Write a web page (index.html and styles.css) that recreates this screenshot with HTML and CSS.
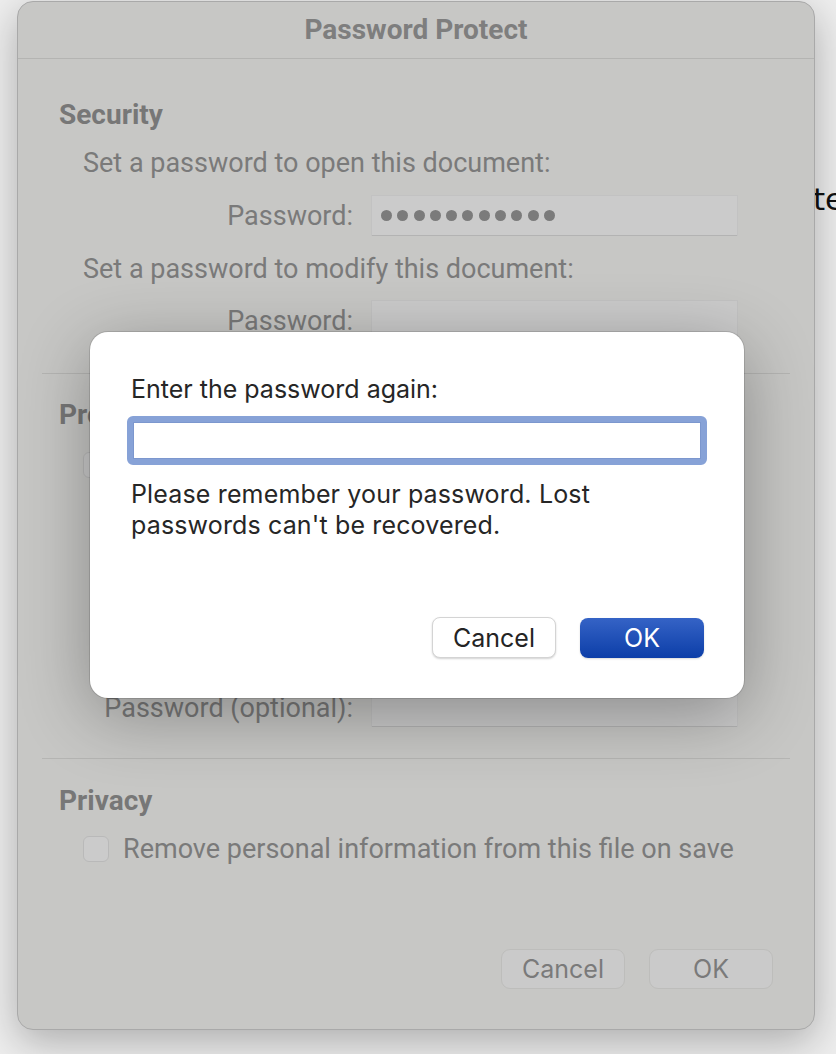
FILE: index.html
```html
<!DOCTYPE html>
<html>
<head>
<meta charset="utf-8">
<link rel="stylesheet" href="styles.css">
</head>
<body>
<div class="behind">ote</div>
<div class="sheet">
  <div class="titlebar">Password Protect</div>
  <div class="section sec1">
    <div class="heading">Security</div>
    <div class="line l1">Set a password to open this document:</div>
    <div class="field-row r1"><span class="label">Password:</span><span class="field"><span class="dots" aria-label="password"><i></i><i></i><i></i><i></i><i></i><i></i><i></i><i></i><i></i><i></i><i></i></span></span></div>
    <div class="line l2">Set a password to modify this document:</div>
    <div class="field-row r2"><span class="label">Password:</span><span class="field"></span></div>
  </div>
  <div class="section sec2">
    <div class="heading">Protection</div>
    <div class="check-row c1"><span class="checkbox"></span><span>Protect document for:</span></div>
    <div class="field-row r3"><span class="label">Password (optional):</span><span class="field"></span></div>
  </div>
  <div class="section sec3">
    <div class="heading">Privacy</div>
    <div class="check-row c2"><span class="checkbox"></span><span>Remove personal information from this file on save</span></div>
    <div class="sheet-buttons">
      <span class="sbtn">Cancel</span>
      <span class="sbtn">OK</span>
    </div>
  </div>
</div>
<div class="dialog">
  <div class="prompt">Enter the password again:</div>
  <div class="input"></div>
  <div class="message">Please remember your password. Lost<br>passwords can't be recovered.</div>
  <div class="dialog-buttons">
    <span class="btn cancel">Cancel</span>
    <span class="btn ok">OK</span>
  </div>
</div>
</body>
</html>
```
FILE: styles.css
```css
html, body {
  margin: 0;
  padding: 0;
}
body {
  width: 836px;
  height: 1054px;
  overflow: hidden;
  background: #eeeeee;
  position: relative;
  font-family: Roboto, "Liberation Sans", sans-serif;
}
.behind {
  position: absolute;
  left: 794px;
  top: 184px;
  font-family: "DejaVu Sans", sans-serif;
  font-weight: 500;
  font-size: 31px;
  line-height: 31px;
  color: #111;
  z-index: 0;
}
.sheet {
  position: relative;
  z-index: 1;
  margin: 1px 0 0 17px;
  width: 796px;
  height: 1027px;
  background: #c7c7c5;
  border: 1px solid #a9a9a9;
  border-radius: 16px;
  box-shadow: 0 12px 40px rgba(0,0,0,0.28);
  display: flex;
  flex-direction: column;
}
.titlebar {
  height: 56px;
  border-bottom: 1px solid #b4b4b2;
  text-align: center;
  line-height: 55px;
  font-size: 28px;
  font-weight: 700;
  color: #7e7e7e;
}
.section {
  margin: 0 24px;
  padding-left: 17px;
  display: flex;
  flex-direction: column;
  color: #7a7a7a;
  font-size: 27px;
}
.sec1 {
  padding-top: 40px;
  height: 274px;
  border-bottom: 1px solid #b5b5b3;
}
.sec2 {
  padding-top: 25px;
  height: 359px;
  border-bottom: 1px solid #b5b5b3;
}
.sec3 {
  padding-top: 26px;
  flex: 1;
}
.heading {
  height: 32px;
  line-height: 32px;
  font-weight: 700;
  font-size: 28px;
  color: #777777;
}
.line {
  height: 32px;
  line-height: 32px;
  padding-left: 24px;
}
.l1 { margin-top: 16px; }
.l2 { margin-top: 18px; }
.field-row {
  display: flex;
  align-items: center;
  height: 39px;
}
.r1 { margin-top: 17px; }
.r2 { margin-top: 16px; }
.r3 { height: 36px; margin-top: 212px; }
.label {
  width: 313px;
  text-align: right;
  padding-right: 19px;
  box-sizing: border-box;
  flex: none;
}
.field {
  width: 365px;
  height: 100%;
  background: #cbcbcb;
  box-shadow: 0 1px 0 #b3b3b3, 0 0 0 1px #c2c2c2;
  display: flex;
  align-items: center;
  padding-left: 9px;
  box-sizing: border-box;
}
.dots {
  display: flex;
  gap: 5.3px;
}
.dots i {
  width: 11px;
  height: 11px;
  border-radius: 50%;
  background: #7b7b7b;
}
.check-row {
  display: flex;
  align-items: center;
  height: 26px;
  padding-left: 24px;
}
.c1 { margin-top: 21px; }
.c2 { margin-top: 19px; }
.checkbox {
  width: 24px;
  height: 24px;
  border: 1px solid #b9b9b9;
  border-radius: 6px;
  background: #cbcbcb;
  margin-right: 14px;
  flex: none;
}
.sheet-buttons {
  margin-top: 87px;
  display: flex;
  justify-content: flex-end;
  gap: 24px;
  padding-right: 17px;
}
.sbtn {
  width: 124px;
  height: 40px;
  box-sizing: border-box;
  border: 1px solid #bdbdbb;
  border-radius: 9px;
  background: #cacaca;
  color: #7a7a7a;
  font-family: Inter, "Liberation Sans", sans-serif;
  font-size: 25px;
  line-height: 38px;
  text-align: center;
}
.dialog {
  position: absolute;
  z-index: 2;
  left: 90px;
  top: 332px;
  width: 654px;
  height: 366px;
  box-sizing: border-box;
  background: #ffffff;
  border-radius: 18px;
  box-shadow: 0 0 0 1px rgba(0,0,0,0.12), 0 16px 70px rgba(0,0,0,0.32);
  padding: 42px 40px 0 37px;
  font-family: Inter, "Liberation Sans", sans-serif;
  color: #262626;
  font-size: 25px;
  display: flex;
  flex-direction: column;
}
.prompt {
  height: 30px;
  line-height: 30px;
  padding-left: 4px;
}
.input {
  margin-top: 12px;
  height: 49px;
  width: 580px;
  box-sizing: border-box;
  border: 6px solid #87a2d7;
  border-radius: 6px;
  box-shadow: inset 0 0 0 1px #7c97ce;
  background: #fff;
}
.message {
  margin-top: 14px;
  line-height: 31px;
  padding-left: 4px;
  letter-spacing: 0.15px;
}
.dialog-buttons {
  margin-top: auto;
  margin-bottom: 40px;
  display: flex;
  justify-content: flex-end;
  gap: 24px;
}
.btn {
  width: 124px;
  height: 41px;
  box-sizing: border-box;
  border-radius: 8px;
  text-align: center;
  line-height: 40px;
  font-size: 25px;
}
.cancel {
  background: #ffffff;
  border: 1px solid #d4d4d4;
  box-shadow: 0 1px 2px rgba(0,0,0,0.18);
  color: #242424;
}
.ok {
  height: 40px;
  margin-top: 1px;
  background: linear-gradient(#3563c6, #0c3ea8);
  color: #ffffff;
  line-height: 40px;
  box-shadow: 0 1px 2px rgba(0,0,0,0.15);
}
```
